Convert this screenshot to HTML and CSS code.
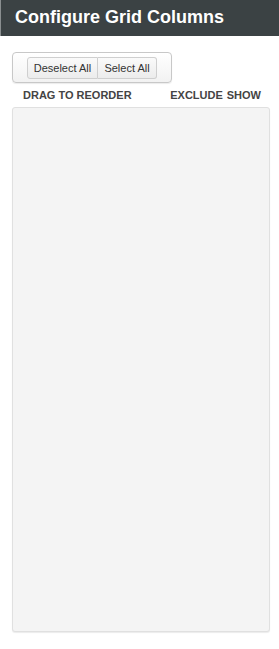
FILE: index.html
```html
<!DOCTYPE html>
<html>
<head>
<meta charset="utf-8">
<link rel="stylesheet" href="styles.css">
</head>
<body>
<div class="dialog">
  <div class="titlebar">Configure Grid Columns</div>
  <div class="content">
    <div class="toolbar">
      <div class="btn-group">
        <button class="btn">Deselect All</button><button class="btn">Select All</button>
      </div>
    </div>
    <div class="col-head">
      <span class="drag">DRAG TO REORDER</span>
      <span class="right"><span class="excl">EXCLUDE</span><span class="show">SHOW</span></span>
    </div>
    <div class="list"></div>
  </div>
</div>
</body>
</html>
```
FILE: styles.css
```css
html, body {
  margin: 0;
  padding: 0;
  background: #fff;
}
body {
  font-family: "Liberation Sans", Arial, sans-serif;
  width: 279px;
  height: 649px;
  overflow: hidden;
}
.dialog {
  width: 279px;
}
.titlebar {
  height: 36px;
  background: #3b4244;
  color: #fff;
  font-weight: bold;
  font-size: 18px;
  line-height: 35px;
  padding-left: 14px;
  box-sizing: border-box;
  border-left: 1px solid #8a8f90;
  white-space: nowrap;
}
.content {
  padding: 16px 9px 0 12px;
}
.toolbar {
  width: 160px;
  height: 31px;
  box-sizing: border-box;
  border: 1px solid #c8c8c8;
  border-radius: 4px;
  background: linear-gradient(#ffffff, #f2f2f2);
  box-shadow: 0 1px 1px rgba(0,0,0,0.08);
  padding: 4px 0 0 14px;
}
.btn-group {
  display: flex;
}
.btn {
  font-family: "Liberation Sans", Arial, sans-serif;
  font-size: 11px;
  color: #333;
  height: 22px;
  padding: 0;
  margin: 0;
  border: 1px solid #cfcfcf;
  background: linear-gradient(#fafafa, #ececec);
  line-height: 20px;
  white-space: nowrap;
  text-align: center;
}
.btn:first-child {
  border-radius: 3px 0 0 3px;
  width: 71px;
}
.btn:last-child {
  border-left: 0;
  border-radius: 0 3px 3px 0;
  width: 59px;
}
.col-head {
  display: flex;
  justify-content: space-between;
  font-size: 11px;
  font-weight: bold;
  color: #444;
  height: 24px;
  line-height: 24px;
  padding: 0 9px 0 11px;
}
.right {
  display: flex;
  gap: 4px;
}
.list {
  height: 525px;
  background: #f4f4f4;
  border: 1px solid #e0e0e0;
  border-radius: 3px;
  box-shadow: 0 1px 1px rgba(0,0,0,0.08);
  box-sizing: border-box;
}
```
